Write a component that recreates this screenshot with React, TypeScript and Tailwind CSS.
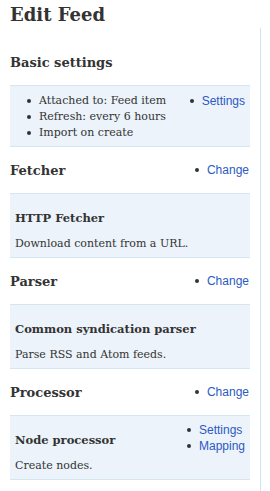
import React from "react";

const serif = { fontFamily: '"DejaVu Serif", "Liberation Serif", serif' };

function Bullet() {
  return <span className="w-[4px] h-[4px] rounded-full bg-[#333] shrink-0" />;
}

function Link({ children }: { children: React.ReactNode }) {
  return (
    <li className="flex items-center gap-[8px] leading-[16px]">
      <Bullet />
      <a className="text-[#2c59c4] text-[12px] font-['Liberation_Sans',Arial,sans-serif]">{children}</a>
    </li>
  );
}

function SectionHead({ title, link }: { title: string; link?: string }) {
  return (
    <div className="flex items-start justify-between pt-[14px] pb-[12px]">
      <h2 className="text-[13px] font-bold text-[#333] leading-[20px]">{title}</h2>
      {link && (
        <ul className="pt-[1px] pr-[1px]">
          <Link>{link}</Link>
        </ul>
      )}
    </div>
  );
}

function PluginBox({ name, desc, links }: { name: string; desc: string; links?: string[] }) {
  return (
    <div className="bg-[#ecf3fa] border-y border-[#d5e6f3] pl-[5px] pr-[5px] flex justify-between">
      <div className="pt-[14px] pb-[5px]">
        <h3 className="text-[11.5px] font-bold text-[#333] leading-[20px]">{name}</h3>
        <p className="text-[11px] text-[#333] leading-[16px] mt-[8px]">{desc}</p>
      </div>
      {links && (
        <ul className="pt-[6px]">
          {links.map((l) => (
            <Link key={l}>{l}</Link>
          ))}
        </ul>
      )}
    </div>
  );
}

export default function App() {
  return (
    <div className="w-[270px] h-[491px] bg-white text-[#333] flex" style={serif}>
      <div className="w-[240px] ml-[10px] flex flex-col">
        <h1 className="text-[18px] font-bold leading-[24px] pt-[3px] pb-[12px]">Edit Feed</h1>
        <SectionHead title="Basic settings" />
        <div className="bg-[#ecf3fa] border-y border-[#d5e6f3] pl-[17px] pr-[5px] pt-[7px] pb-[5px] flex justify-between">
          <ul className="text-[11px] leading-[16px]">
            {["Attached to: Feed item", "Refresh: every 6 hours", "Import on create"].map((t) => (
              <li key={t} className="flex items-center gap-[8px]">
                <Bullet />
                {t}
              </li>
            ))}
          </ul>
          <ul>
            <Link>Settings</Link>
          </ul>
        </div>
        <SectionHead title="Fetcher" link="Change" />
        <PluginBox name="HTTP Fetcher" desc="Download content from a URL." />
        <SectionHead title="Parser" link="Change" />
        <PluginBox name="Common syndication parser" desc="Parse RSS and Atom feeds." />
        <SectionHead title="Processor" link="Change" />
        <PluginBox name="Node processor" desc="Create nodes." links={["Settings", "Mapping"]} />
      </div>
      <div className="ml-[10px] mt-[28px] w-px bg-[#cfe3f5] h-[463px]" />
    </div>
  );
}
